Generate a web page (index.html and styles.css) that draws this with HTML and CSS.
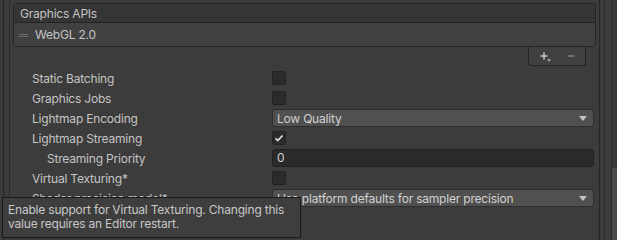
FILE: index.html
```html
<!DOCTYPE html>
<html lang="en">
<head>
  <meta charset="UTF-8">
  <title>Player Settings - Other Settings</title>
  <link rel="stylesheet" href="styles.css">
</head>
<body>
  <div class="window">
    <div class="gutter"></div>

    <div class="inspector">
      <div class="list">
        <div class="list-header">Graphics APIs</div>
        <div class="list-item">
          <span class="handle"></span>
          <span>WebGL 2.0</span>
        </div>
      </div>
      <div class="list-footer">
        <svg class="icon-add" width="14" height="12" viewBox="0 0 14 12">
          <path d="M5 1.5v7M1.5 5h7" stroke="#c8c8c8" stroke-width="1.6" fill="none"/>
          <path d="M8 8.5h4l-2 2z" fill="#c8c8c8"/>
        </svg>
        <svg class="icon-remove" width="10" height="10" viewBox="0 0 10 10">
          <path d="M1.5 5h7" stroke="#8a8a8a" stroke-width="1.4" fill="none"/>
        </svg>
      </div>

      <div class="props">
        <div class="row">
          <div class="label">Static Batching</div>
          <div class="field"><span class="toggle"></span></div>
        </div>
        <div class="row">
          <div class="label">Graphics Jobs</div>
          <div class="field"><span class="toggle"></span></div>
        </div>
        <div class="row">
          <div class="label">Lightmap Encoding</div>
          <div class="field">
            <div class="popup">
              <span>Low Quality</span>
              <span class="arrow"></span>
            </div>
          </div>
        </div>
        <div class="row">
          <div class="label">Lightmap Streaming</div>
          <div class="field">
            <span class="toggle">
              <svg width="12" height="12" viewBox="0 0 12 12">
                <path d="M2.5 6.2l2.3 2.3 4.7-5" stroke="#e6e6e6" stroke-width="1.6" fill="none"/>
              </svg>
            </span>
          </div>
        </div>
        <div class="row">
          <div class="label indent">Streaming Priority</div>
          <div class="field"><div class="number">0</div></div>
        </div>
        <div class="row">
          <div class="label">Virtual Texturing*</div>
          <div class="field"><span class="toggle"></span></div>
        </div>
        <div class="row">
          <div class="label">Shader precision model*</div>
          <div class="field">
            <div class="popup">
              <span>Use platform defaults for sampler precision</span>
              <span class="arrow"></span>
            </div>
          </div>
        </div>
      </div>
    </div>

    <div class="scroll">
      <div class="scroll-gap"></div>
      <div class="scroll-track"><div class="scroll-thumb"></div></div>
    </div>

    <!-- hover tooltip over Virtual Texturing -->
    <div class="tooltip">
      Enable support for Virtual Texturing. Changing this<br>
      value requires an Editor restart.
    </div>
  </div>
</body>
</html>
```

FILE: styles.css
```css
body {
  margin: 0;
  background-color: #3c3c3c;
  font-family: Inter, "Noto Sans", sans-serif;
  font-size: 12px;
  letter-spacing: -0.2px;
  color: #c4c4c4;
}

.window {
  position: relative;
  display: flex;
  height: 240px;
  overflow: hidden;
}

.gutter {
  width: 5px;
  margin-left: 3px;
  margin-right: 3px;
  border-left: 1px solid #262626;
  border-right: 1px solid #2c2c2c;
}

.inspector {
  width: 584px;
  padding: 3px 3px 0 0;
}

/* reorderable list */
.list {
  border: 1px solid #242424;
  border-radius: 3px;
  overflow: hidden;
}

.list-header {
  height: 18px;
  line-height: 19px;
  padding-left: 6px;
  background-color: #353535;
  border-bottom: 1px solid #232323;
}

.list-item {
  display: flex;
  align-items: center;
  height: 23px;
  background-color: #414141;
}

.handle {
  width: 9px;
  height: 3px;
  margin: 1px 7px 0 5px;
  border-top: 1px solid #6e6e6e;
  border-bottom: 1px solid #6e6e6e;
  box-sizing: border-box;
}

.list-footer {
  display: flex;
  align-items: center;
  width: 56px;
  height: 18px;
  margin-left: auto;
  margin-right: 10px;
  background-color: #414141;
  border: 1px solid #242424;
  border-top: none;
  border-radius: 0 0 3px 3px;
}

.icon-add {
  margin-left: 10px;
  margin-top: 1px;
}

.icon-remove {
  margin-left: 13px;
}

/* property rows */
.props {
  padding: 2px 2px 0 19px;
}

.row {
  display: flex;
  align-items: center;
  height: 20px;
}

.label {
  width: 240px;
  flex-shrink: 0;
  white-space: nowrap;
  overflow: hidden;
}

.label.indent {
  width: 225px;
  padding-left: 15px;
}

.field {
  flex: 1;
  display: flex;
  align-items: center;
}

.toggle {
  display: flex;
  align-items: center;
  justify-content: center;
  width: 12px;
  height: 12px;
  background-color: #2b2b2b;
  border: 1px solid #232323;
  border-radius: 2px;
}

.popup {
  flex: 1;
  display: flex;
  align-items: center;
  justify-content: space-between;
  height: 16px;
  padding: 0 6px 0 4px;
  background-color: #505050;
  border: 1px solid #2e2e2e;
  border-radius: 3px;
  color: #d0d0d0;
}

.arrow {
  width: 0;
  height: 0;
  border-left: 4px solid transparent;
  border-right: 4px solid transparent;
  border-top: 5px solid #c4c4c4;
}

.number {
  flex: 1;
  height: 16px;
  line-height: 16px;
  padding-left: 4px;
  background-color: #2a2a2a;
  border: 1px solid #212121;
  border-radius: 3px;
  color: #d2d2d2;
}

/* right scroll edge */
.scroll {
  display: flex;
  width: 17px;
  border-left: 1px solid #262626;
}

.scroll-gap {
  width: 4px;
  border-right: 1px solid #2a2a2a;
}

.scroll-track {
  flex: 1;
  margin-left: 6px;
  border-left: 1px solid #2e2e2e;
  background-color: #383838;
}

.scroll-thumb {
  margin-top: 168px;
  height: 80px;
  background-color: #4a4a4a;
}

.tooltip {
  position: absolute;
  left: 2px;
  top: 197px;
  width: 292px;
  height: 34px;
  padding: 5px 0 0 5px;
  line-height: 14px;
  background-color: #3e3e3e;
  border: 1px solid #1b1b1b;
  color: #c8c8c8;
  white-space: nowrap;
}
```
